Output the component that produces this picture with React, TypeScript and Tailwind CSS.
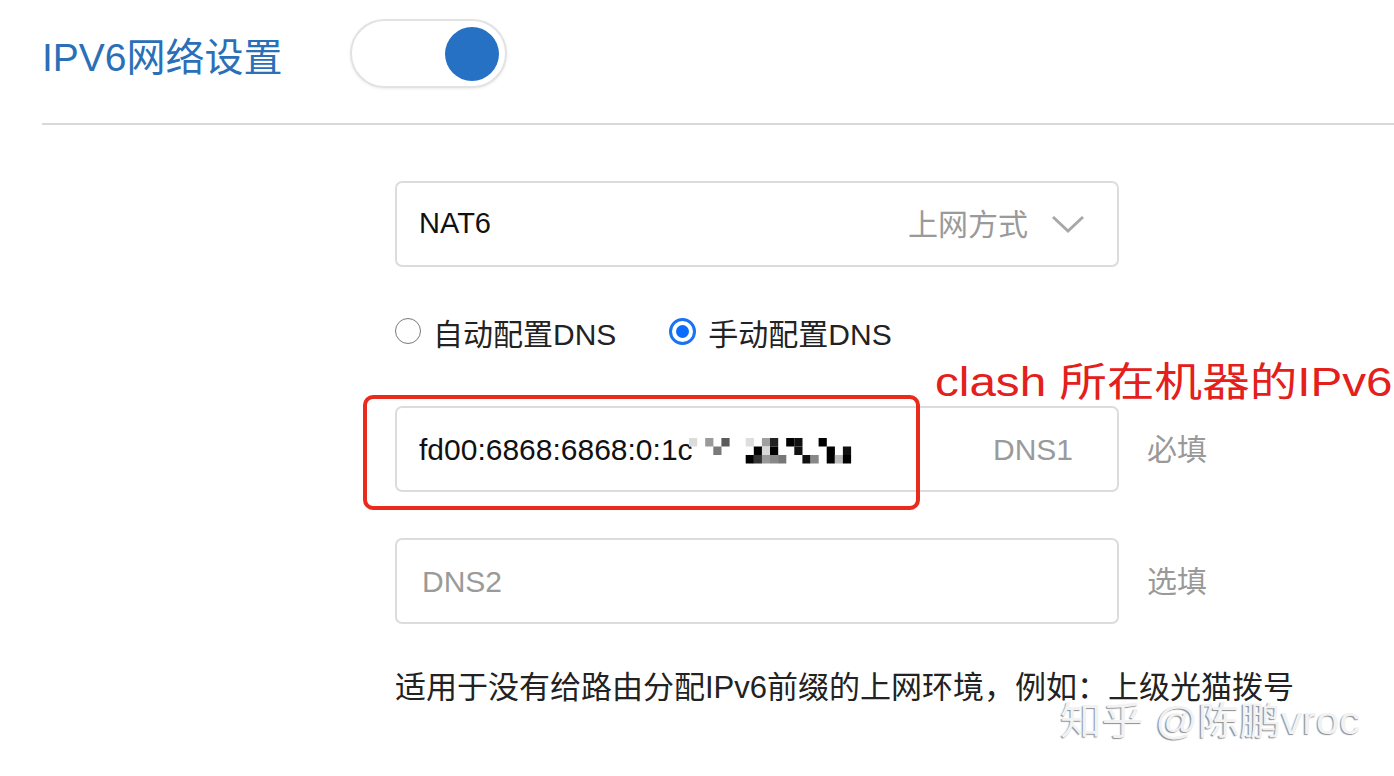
import React from 'react';

const FONT = "font-['Liberation_Sans','Noto_Sans_CJK_SC',sans-serif]";

// pixel mosaic over the hidden part of the address: [col, row, colour]
const mosaic: [number, number, string][] = [
  [0, 0, '#dcdcdc'], [2, 0, '#9a9a9a'], [4, 0, '#5a5a5a'], [7, 0, '#dedede'],
  [9, 0, '#a0a0a0'], [10, 0, '#222'], [12, 0, '#000'], [13, 0, '#111'], [16, 0, '#000'],
  [3, 1, '#7a7a7a'], [8, 1, '#000'], [9, 1, '#d8d8d8'], [10, 1, '#000'],
  [13, 1, '#111'], [17, 1, '#000'], [19, 1, '#111'],
  [7, 2, '#000'], [8, 2, '#333'], [9, 2, '#999'], [10, 2, '#888'], [11, 2, '#777'],
  [14, 2, '#111'], [15, 2, '#888'], [17, 2, '#000'], [18, 2, '#bbb'], [19, 2, '#000'],
];

const Mosaic = () => (
  <svg width="164" height="26" viewBox="0 0 164 26" className="shrink-0 -ml-[4px] translate-y-[2px]">
    {mosaic.map(([c, r, col], i) => (
      <rect key={i} x={c * 8.1} y={r * 8.5} width="8.2" height="8.5" fill={col} />
    ))}
  </svg>
);

const Radio = ({ checked, label }: { checked?: boolean; label: string }) => (
  <div className="flex items-center">
    {checked ? (
      <span className="w-[27px] h-[27px] rounded-full border-[3px] border-[#1a73f0] flex items-center justify-center -translate-y-[4px]">
        <span className="w-[13px] h-[13px] rounded-full bg-[#0a6cff]" />
      </span>
    ) : (
      <span className="w-[26px] h-[26px] rounded-full border-[1.5px] border-[#7a7a7a] -translate-y-[4px]" />
    )}
    <span className="ml-[12px] text-[30px] leading-none text-[#222]">{label}</span>
  </div>
);

export default function App() {
  return (
    <div className={`relative w-[1394px] h-[776px] bg-white overflow-hidden ${FONT}`}>
      {/* Header */}
      <div className="pl-[42px]">
        <div className="flex items-start pt-[19px]">
          <h1 className="mt-[19px] text-[39px] leading-none text-[#2a6fb7]">IPV6网络设置</h1>
          <div className="ml-[67px] w-[157px] h-[69px] rounded-full border-2 border-[#e2e2e2] shadow-[0_1px_3px_rgba(0,0,0,0.08)] flex items-center justify-end pr-[6px]">
            <span className="w-[54px] h-[54px] rounded-full bg-[#2671c4]" />
          </div>
        </div>
        <div className="mt-[35px] h-[2px] bg-[#d9d9d9]" />
      </div>

      {/* Form */}
      <div className="pl-[395px] pt-[56px]">
        <div className="w-[724px] h-[86px] rounded-[7px] border-2 border-[#dcdcdc] flex items-center pl-[22px] pr-[32px]">
          <span className="text-[29px] text-[#111]">NAT6</span>
          <span className="ml-auto text-[30px] text-[#9a9a9a]">上网方式</span>
          <svg width="34" height="20" viewBox="0 0 34 20" className="ml-[23px]">
            <path d="M2 3 L17 17 L32 3" fill="none" stroke="#a8a8a8" strokeWidth="3" />
          </svg>
        </div>

        <div className="mt-[50px] h-[36px] flex items-center gap-[53px]">
          <Radio label="自动配置DNS" />
          <Radio checked label="手动配置DNS" />
        </div>

        <div className="relative mt-[53px] flex items-center">
          <div className="w-[724px] h-[86px] rounded-[7px] border-2 border-[#dcdcdc] flex items-center pl-[22px] pr-[44px]">
            <span className="text-[30px] text-[#111] whitespace-nowrap">fd00:6868:6868:0:1c</span>
            <Mosaic />
            <span className="ml-auto text-[30px] text-[#9a9a9a]">DNS1</span>
          </div>
          <span className="ml-[28px] text-[30px] text-[#999]">必填</span>
          <div className="absolute left-[-32px] top-[-11px] w-[557px] h-[115px] rounded-[10px] border-[4px] border-[#ea2a1c]" />
        </div>

        <div className="mt-[46px] flex items-center">
          <div className="w-[724px] h-[86px] rounded-[7px] border-2 border-[#dcdcdc] flex items-center pl-[25px]">
            <span className="text-[30px] text-[#9a9a9a]">DNS2</span>
          </div>
          <span className="ml-[28px] text-[30px] text-[#999]">选填</span>
        </div>

        <p className="mt-[48px] text-[31px] leading-[31px] text-[#222] whitespace-nowrap">
          适用于没有给路由分配IPv6前缀的上网环境，例如：上级光猫拨号
        </p>
      </div>

      {/* Annotation */}
      <div className="absolute left-[935px] top-[362px] origin-left scale-x-[1.19] text-[40px] leading-none text-[#e3201b] whitespace-nowrap">
        clash 所在机器的IPv6
      </div>

      {/* Watermark */}
      <div className="absolute left-[1060px] top-[702px] origin-left scale-x-[1.1] text-[38px] leading-none text-[#f2f2f2] whitespace-nowrap [text-shadow:-1px_1px_1px_rgba(0,0,0,0.45)]">
        知乎 @陈鹏vroc
      </div>
    </div>
  );
}
